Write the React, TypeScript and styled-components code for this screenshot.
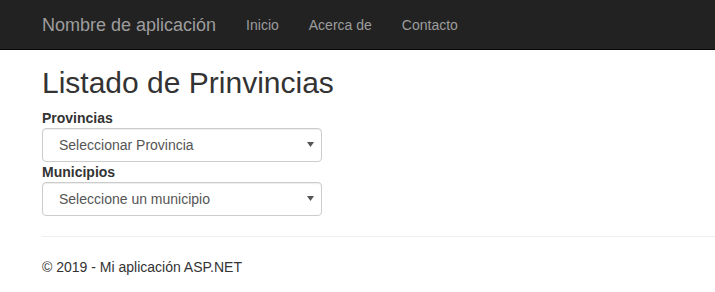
import styled, {createGlobalStyle} from "styled-components";

const GlobalStyle = createGlobalStyle`
    html, body {
        margin: 0;
        padding: 0;
        background: #fff;
    }
    body {
        font-family: "Liberation Sans", Arial, sans-serif;
        font-size: 14px;
        line-height: 20px;
        color: #333;
        overflow: hidden;
    }
`;

const links = ["Inicio", "Acerca de", "Contacto"];

/**
 * ASP.NET default layout page with the province / municipality filter.
 */
const App = () => {
    return <>
        <GlobalStyle />
        <Navbar>
            <Brand href="#">Nombre de aplicación</Brand>
            <NavList>
                {links.map(it => <NavItem key={it}><NavLink href="#">{it}</NavLink></NavItem>)}
            </NavList>
        </Navbar>
        <BodyContent>
            <Title>Listado de Prinvincias</Title>
            <Field label="Provincias" placeholder="Seleccionar Provincia" />
            <Field label="Municipios" placeholder="Seleccione un municipio" />
            <Rule />
            <Footer>© 2019 - Mi aplicación ASP.NET</Footer>
        </BodyContent>
    </>;
};

export default App;

/**
 * A label with a dropdown right under it.
 */
const Field = ({label, placeholder}: {label: string, placeholder: string}) => {
    return <FieldGroup>
        <Label>{label}</Label>
        <SelectWrap>
            <Select defaultValue="">
                <option value="">{placeholder}</option>
            </Select>
            <Caret width="7" height="5" viewBox="0 0 7 5">
                <path d="M0 0 L7 0 L3.5 5 Z" fill="#555" />
            </Caret>
        </SelectWrap>
    </FieldGroup>;
};

const Navbar = styled.nav`
    height: 50px;
    box-sizing: border-box;
    background-color: #222;
    border-bottom: 1px solid #080808;
    display: flex;
    align-items: center;
    padding-left: 27px;
`;

const Brand = styled.a`
    padding: 0 15px;
    font-size: 18px;
    line-height: 20px;
    color: #9d9d9d;
    text-decoration: none;
`;

const NavList = styled.ul`
    display: flex;
    margin: 0;
    padding: 0;
    list-style: none;
`;

const NavItem = styled.li``;

const NavLink = styled.a`
    display: block;
    padding: 15px;
    font-size: 14px;
    line-height: 20px;
    color: #9d9d9d;
    text-decoration: none;
`;

const BodyContent = styled.div`
    padding-left: 42px;
`;

const Title = styled.h2`
    margin: 16px 0 9px;
    font-size: 30px;
    font-weight: 500;
    line-height: 33px;
    color: #333;
`;

const FieldGroup = styled.div`
    display: flex;
    flex-direction: column;
    align-items: flex-start;
`;

const Label = styled.label`
    font-weight: bold;
    line-height: 20px;
`;

const SelectWrap = styled.div`
    position: relative;
    width: 280px;
`;

const Select = styled.select`
    appearance: none;
    display: block;
    width: 100%;
    height: 34px;
    box-sizing: border-box;
    padding: 6px 12px 6px 16px;
    font-family: "Liberation Sans", Arial, sans-serif;
    font-size: 14px;
    color: #555;
    background-color: #fff;
    border: 1px solid #ccc;
    border-radius: 4px;
    box-shadow: inset 0 1px 1px rgba(0, 0, 0, .075);
    outline: none;
`;

const Caret = styled.svg`
    position: absolute;
    right: 8px;
    top: 14px;
    pointer-events: none;
`;

const Rule = styled.hr`
    margin: 20px 0;
    border: 0;
    border-top: 1px solid #eee;
`;

const Footer = styled.footer`
    margin: 0;
    line-height: 20px;
`;
